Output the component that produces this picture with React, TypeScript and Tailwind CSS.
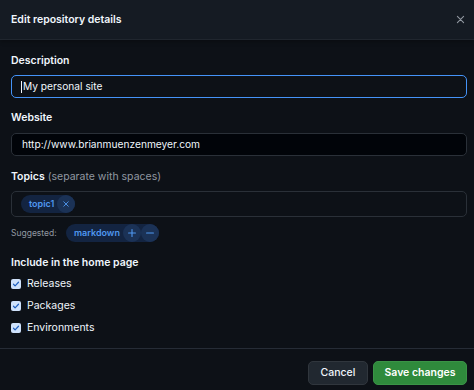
import React from "react";

function Check() {
  return (
    <span className="w-[10px] h-[10px] rounded-[2px] bg-[#cfe2fb] flex items-center justify-center shrink-0">
      <svg width="8" height="8" viewBox="0 0 16 16" fill="none">
        <path d="M3 8.5l3.2 3.2L13 4.5" stroke="#1f5fbf" strokeWidth="2.4" strokeLinecap="round" strokeLinejoin="round" />
      </svg>
    </span>
  );
}

export default function App() {
  return (
    <div className="w-[474px] h-[390px] bg-[#0d1117] flex flex-col overflow-hidden text-[#f0f6fc]" style={{ fontFamily: "Inter, 'Noto Sans', sans-serif" }}>
      <div className="h-[40px] shrink-0 bg-[#151b23] border-b border-[#20262e] flex items-center justify-between pl-[11px] pr-[8px] shadow-[0_2px_4px_rgba(0,0,0,0.25)]">
        <span className="text-[10.5px] font-semibold leading-[14px]">Edit repository details</span>
        <svg width="11" height="11" viewBox="0 0 16 16" fill="none">
          <path d="M3.5 3.5l9 9M12.5 3.5l-9 9" stroke="#9198a1" strokeWidth="1.6" strokeLinecap="round" />
        </svg>
      </div>
      <div className="flex-1 flex flex-col pl-[11px] pr-[7px] pt-[14px]">
        <div className="text-[10.5px] font-semibold leading-[14px]">Description</div>
        <div className="mt-[7px] h-[23px] rounded-[5px] border-[1.5px] border-[#4493f8] bg-[#0d1117] flex items-center pl-[9px] text-[10.2px]">
          <span className="w-px h-[12px] bg-[#f0f6fc] mr-[1px]" />
          <span>My personal site</span>
        </div>
        <div className="mt-[13px] text-[10.5px] font-semibold leading-[14px]">Website</div>
        <div className="mt-[8px] h-[23px] rounded-[5px] border border-[#2a3038] bg-[#010409] flex items-center pl-[10px] text-[10.2px]">
          http://www.brianmuenzenmeyer.com
        </div>
        <div className="mt-[14px] text-[10.5px] leading-[14px]">
          <span className="font-semibold">Topics</span>
          <span className="text-[#9198a1]"> (separate with spaces)</span>
        </div>
        <div className="mt-[7px] h-[26px] rounded-[5px] border border-[#2a3038] bg-[#0d1117] flex items-center pl-[9px]">
          <div className="h-[18px] rounded-full bg-[#132441] flex items-center pl-[8px]">
            <span className="text-[9px] font-semibold text-[#4f97f0] mr-[3px]">topic1</span>
            <span className="w-[18px] h-[18px] rounded-full bg-[#1b3256] flex items-center justify-center">
              <svg width="8" height="8" viewBox="0 0 16 16" fill="none">
                <path d="M3.5 3.5l9 9M12.5 3.5l-9 9" stroke="#4f97f0" strokeWidth="1.8" strokeLinecap="round" />
              </svg>
            </span>
          </div>
        </div>
        <div className="mt-[7px] flex items-center h-[18px]">
          <span className="text-[8.5px] text-[#9198a1] w-[55px]">Suggested:</span>
          <div className="h-[18px] rounded-full bg-[#132441] flex items-center pl-[8px]">
            <span className="text-[9px] font-semibold text-[#4f97f0] mr-[3px]">markdown</span>
            <span className="w-[18px] h-[18px] rounded-full bg-[#1b3256] flex items-center justify-center">
              <svg width="10" height="10" viewBox="0 0 16 16" fill="none">
                <path d="M8 2.5v11M2.5 8h11" stroke="#4f97f0" strokeWidth="1.8" strokeLinecap="round" />
              </svg>
            </span>
            <span className="w-[18px] h-[18px] rounded-full bg-[#1b3256] flex items-center justify-center">
              <svg width="10" height="10" viewBox="0 0 16 16" fill="none">
                <path d="M2.5 8h11" stroke="#4f97f0" strokeWidth="1.8" strokeLinecap="round" />
              </svg>
            </span>
          </div>
        </div>
        <div className="mt-[14px] text-[10.5px] font-semibold leading-[14px]">Include in the home page</div>
        <div className="mt-[7px] flex flex-col gap-[8px]">
          {["Releases", "Packages", "Environments"].map((t) => (
            <div key={t} className="flex items-center gap-[6px] h-[14px]">
              <Check />
              <span className="text-[10.5px] leading-[14px]">{t}</span>
            </div>
          ))}
        </div>
      </div>
      <div className="h-[42px] shrink-0 border-t border-[#262c36] flex items-start justify-end gap-[5px] pr-[7px] pt-[12px]">
        <button className="h-[24px] w-[60px] rounded-[5px] bg-[#212830] border border-[#30363d] text-[10.5px] font-medium text-[#f0f6fc]">Cancel</button>
        <button className="h-[24px] w-[94px] rounded-[5px] bg-[#2f8a3c] border border-[#3a9346] text-[10.5px] font-semibold text-white">Save changes</button>
      </div>
    </div>
  );
}
